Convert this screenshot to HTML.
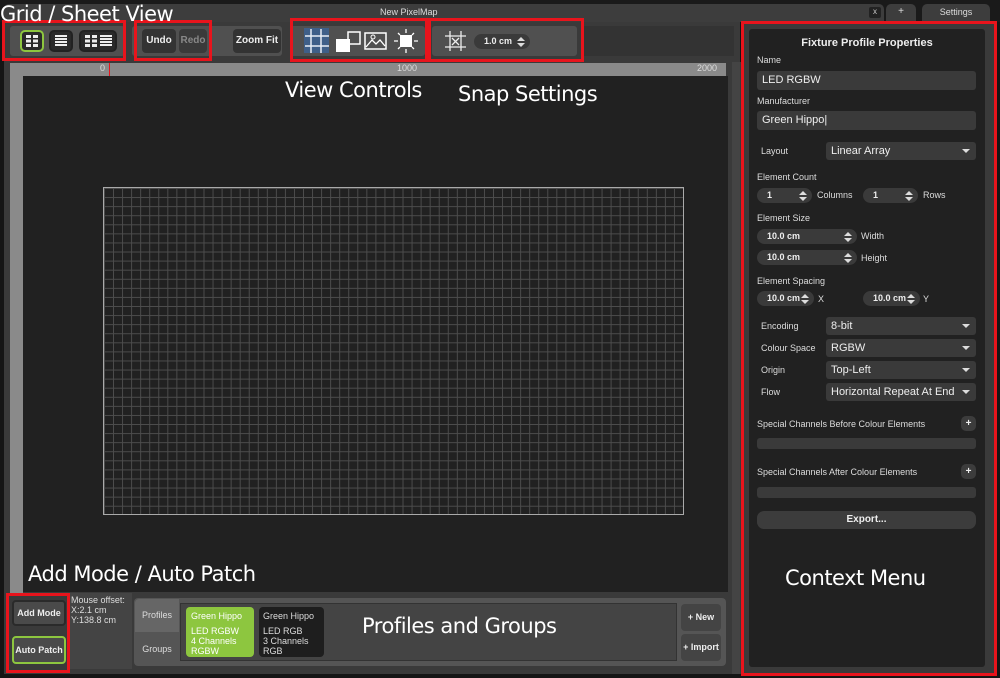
<!DOCTYPE html>
<html><head><meta charset="utf-8"><style>
*{box-sizing:border-box;margin:0;padding:0}
body{width:1000px;height:678px;background:#151515;font-family:"Liberation Sans",sans-serif;position:relative;overflow:hidden;color:#ddd}
.a{position:absolute}
.red{position:absolute;border:3px solid #e8141c}
.btn{position:absolute;background:#3c3c3c;border-radius:4px;color:#eee;font-size:10px;font-weight:bold;text-align:center;white-space:nowrap}
.lbl{position:absolute;font-size:9px;color:#ddd;white-space:nowrap}
.field{position:absolute;background:#3a3a3a;border-radius:3px;font-size:11px;color:#eee;padding-left:5px}
.spin{position:absolute;background:#3a3a3a;border-radius:8px;height:15px;font-size:9px;font-weight:bold;color:#eee;padding-left:10px;line-height:15px}
.spin:after{content:"";position:absolute;right:5px;top:3px;border-left:4px solid transparent;border-right:4px solid transparent;border-bottom:4px solid #ddd}
.spin:before{content:"";position:absolute;right:5px;top:9px;border-left:4px solid transparent;border-right:4px solid transparent;border-top:4px solid #ddd}
.dd{position:absolute;background:#3a3a3a;border-radius:3px;height:18px;font-size:11px;color:#eee;padding-left:5px;line-height:18px;left:826px;width:150px}
.dd:after{content:"";position:absolute;right:6px;top:7px;border-left:4px solid transparent;border-right:4px solid transparent;border-top:4px solid #ddd}
.ann{position:absolute;color:#fff;font-size:21px;font-family:"DejaVu Sans","Liberation Sans",sans-serif;font-weight:normal;letter-spacing:-0.5px;white-space:nowrap}
.grid{position:absolute;left:103px;top:187px;width:581px;height:328px;border:1px solid #aaa;
background-image:linear-gradient(to right,#4d4d4d 1px,transparent 1px),linear-gradient(to bottom,#4d4d4d 1px,transparent 1px);
background-size:9.06px 9.08px}
</style></head><body>
<div class="a" style="left:0;top:0;width:1000px;height:22px;background:#1a1a1a"></div>
<div class="a" style="left:4px;top:4px;width:880px;height:18px;background:#3d3d3d;border-radius:5px 5px 0 0"></div>
<div class="a" style="left:380px;top:7px;font-size:9px;color:#ddd">New PixelMap</div>
<div class="a" style="left:869px;top:7px;width:12px;height:11px;background:#222;border-radius:2px;font-size:8px;text-align:center;color:#ccc">x</div>
<div class="a" style="left:886px;top:4px;width:30px;height:18px;background:#3d3d3d;border-radius:5px 5px 0 0;font-size:10px;text-align:center;line-height:16px">+</div>
<div class="a" style="left:922px;top:4px;width:68px;height:18px;background:#3d3d3d;border-radius:5px 5px 0 0;font-size:9px;text-align:center;line-height:16px">Settings</div>
<div class="a" style="left:4px;top:22px;width:736px;height:40px;background:#3a3a3a"></div>
<div class="a" style="left:10px;top:26px;width:115px;height:30px;background:#505050;border-radius:3px"></div>
<div class="a" style="left:20px;top:30px;width:24px;height:22px;background:#2a2a2a;border:2px solid #8dc63f;border-radius:5px"></div>
<svg class="a" style="left:26px;top:35px" width="12" height="12"><g fill="#eee"><rect x="0" y="0" width="5" height="3"/><rect x="7" y="0" width="5" height="3"/><rect x="0" y="4.5" width="5" height="3"/><rect x="7" y="4.5" width="5" height="3"/><rect x="0" y="9" width="5" height="3"/><rect x="7" y="9" width="5" height="3"/></g></svg>
<div class="a" style="left:49px;top:30px;width:24px;height:22px;background:#2a2a2a;border:2px solid #222;border-radius:5px"></div>
<div class="a" style="left:55px;top:35px;width:12px;height:11px;background:repeating-linear-gradient(#eee 0 2px,transparent 2px 3px)"></div>
<div class="a" style="left:79px;top:30px;width:38px;height:22px;background:#2a2a2a;border:2px solid #222;border-radius:5px"></div>
<svg class="a" style="left:85px;top:35px" width="12" height="12"><g fill="#eee"><rect x="0" y="0" width="5" height="3"/><rect x="7" y="0" width="5" height="3"/><rect x="0" y="4.5" width="5" height="3"/><rect x="7" y="4.5" width="5" height="3"/><rect x="0" y="9" width="5" height="3"/><rect x="7" y="9" width="5" height="3"/></g></svg>
<div class="a" style="left:100px;top:35px;width:12px;height:11px;background:repeating-linear-gradient(#eee 0 2px,transparent 2px 3px)"></div>
<div class="a" style="left:132px;top:26px;width:150px;height:30px;background:#505050;border-radius:3px"></div>
<div class="btn" style="left:142px;top:29px;width:34px;height:24px;background:#333;line-height:24px">Undo</div>
<div class="btn" style="left:179px;top:29px;width:28px;height:24px;background:#3a3a3a;line-height:24px;color:#888">Redo</div>
<div class="btn" style="left:233px;top:29px;width:48px;height:24px;background:#333;line-height:24px">Zoom Fit</div>
<div class="a" style="left:290px;top:26px;width:135px;height:30px;background:#505050;border-radius:3px"></div>
<svg class="a" style="left:300px;top:27px" width="125" height="28">
<rect x="4" y="1" width="25" height="25" fill="#3f5f88"/>
<path d="M11 2V26M21 2V26M5 9H29M5 19H29" stroke="#e8eef5" stroke-width="1.5"/>
<rect x="48" y="5" width="12" height="12" fill="none" stroke="#fff" stroke-width="1.5"/>
<rect x="36" y="12" width="14" height="13" fill="#fff"/>
<rect x="65" y="6" width="21" height="16" fill="none" stroke="#fff" stroke-width="1.5"/>
<path d="M66 20L72 13L76 17L80 13L85 19" stroke="#fff" fill="none" stroke-width="1.3"/><circle cx="73" cy="10" r="2" fill="none" stroke="#fff"/>
<rect x="100" y="8" width="12" height="12" fill="#fff"/>
<path d="M106 2V6M106 22V26M94 14H98M114 14H118M98 6L100 8M114 6L112 8M98 22L100 20M114 22L112 20" stroke="#fff" stroke-width="1.3"/>
</svg>
<div class="a" style="left:432px;top:26px;width:145px;height:30px;background:#505050;border-radius:3px"></div>
<svg class="a" style="left:443px;top:29px" width="25" height="24"><path d="M7 2V22M18 2V22M2 7H23M2 18H23M9 9L16 16M16 9L9 16" stroke="#eee" stroke-width="1.3"/></svg>
<div class="spin" style="left:474px;top:34px;width:56px">1.0 cm</div>
<div class="a" style="left:584px;top:26px;width:150px;height:30px;background:#333"></div>
<div class="red" style="left:2px;top:20px;width:124px;height:41px"></div>
<div class="red" style="left:134px;top:20px;width:78px;height:41px"></div>
<div class="red" style="left:290px;top:18px;width:138px;height:44px"></div>
<div class="red" style="left:428px;top:18px;width:156px;height:44px"></div>
<div class="ann" style="left:0;top:2px">Grid / Sheet View</div>
<div class="a" style="left:4px;top:62px;width:738px;height:612px;background:#3a3a3a"></div>
<div class="a" style="left:10px;top:63px;width:716px;height:13px;background:#8a8a8a"></div>
<div class="a" style="left:10px;top:63px;width:13px;height:530px;background:#8a8a8a"></div>
<div class="a" style="left:100px;top:63px;font-size:9px;color:#ddd">0</div>
<div class="a" style="left:397px;top:63px;font-size:9px;color:#ddd">1000</div>
<div class="a" style="left:697px;top:63px;font-size:9px;color:#ddd">2000</div>
<div class="a" style="left:109px;top:63px;width:1px;height:13px;background:#e8141c"></div>
<div class="a" style="left:23px;top:76px;width:705px;height:516px;background:#212121"></div>
<div class="grid"></div>
<div class="a" style="left:732px;top:62px;width:8px;height:612px;background:#444"></div>
<div class="ann" style="left:285px;top:78px">View Controls</div>
<div class="ann" style="left:458px;top:82px">Snap Settings</div>
<div class="ann" style="left:28px;top:562px">Add Mode / Auto Patch</div>
<div class="a" style="left:8px;top:593px;width:722px;height:76px;background:#3a3a3a"></div>
<div class="btn" style="left:12px;top:600px;width:54px;height:26px;background:#4a4a4a;border:2px solid #2a2a2a;line-height:22px;font-size:9px">Add Mode</div>
<div class="btn" style="left:12px;top:636px;width:54px;height:28px;background:#4a4a4a;border:2px solid #8dc63f;line-height:24px;font-size:9px">Auto Patch</div>
<div class="red" style="left:6px;top:593px;width:64px;height:80px"></div>
<div class="a" style="left:70px;top:593px;width:62px;height:76px;background:#444"></div>
<div class="a" style="left:71px;top:595px;font-size:9px;line-height:10px;color:#ddd">Mouse offset:<br>X:2.1 cm<br>Y:138.8 cm</div>
<div class="a" style="left:134px;top:598px;width:592px;height:68px;background:#555;border-radius:4px"></div>
<div class="a" style="left:135px;top:599px;width:44px;height:33px;background:#666;border-radius:4px 0 0 0;font-size:9px;text-align:center;line-height:32px">Profiles</div>
<div class="a" style="left:135px;top:634px;width:44px;height:30px;font-size:9px;text-align:center;line-height:30px">Groups</div>
<div class="a" style="left:180px;top:603px;width:497px;height:58px;background:#444;border:1px solid #333"></div>
<div class="a" style="left:186px;top:607px;width:68px;height:50px;background:#8dc63f;border-radius:4px;font-size:9px;color:#fff;padding:4px 5px;line-height:10px;overflow:hidden">Green Hippo<br><div style="height:5px"></div>LED RGBW<br>4 Channels<br>RGBW</div>
<div class="a" style="left:259px;top:607px;width:65px;height:50px;background:#1e1e1e;border-radius:4px;font-size:9px;color:#ddd;padding:4px 4px;line-height:10px;overflow:hidden">Green Hippo<br><div style="height:5px"></div>LED RGB<br>3 Channels<br>RGB</div>
<div class="btn" style="left:681px;top:604px;width:40px;height:27px;background:#444;line-height:27px;font-size:9px">+ New</div>
<div class="btn" style="left:681px;top:634px;width:40px;height:27px;background:#444;line-height:27px;font-size:9px">+ Import</div>
<div class="ann" style="left:362px;top:614px">Profiles and Groups</div>
<div class="a" style="left:742px;top:22px;width:254px;height:652px;background:#3a3a3a"></div>
<div class="a" style="left:749px;top:29px;width:236px;height:638px;background:#212121;border-radius:3px"></div>
<div class="red" style="left:741px;top:21px;width:256px;height:655px"></div>
<div class="a" style="left:749px;top:37px;width:236px;text-align:center;font-size:11px;font-weight:bold;color:#eee">Fixture Profile Properties</div>
<div class="lbl" style="left:757px;top:55px">Name</div>
<div class="field" style="left:757px;top:71px;width:219px;height:19px;line-height:19px">LED RGBW</div>
<div class="lbl" style="left:757px;top:96px">Manufacturer</div>
<div class="field" style="left:757px;top:111px;width:219px;height:19px;line-height:19px">Green Hippo|</div>
<div class="lbl" style="left:761px;top:146px">Layout</div>
<div class="dd" style="top:142px">Linear Array</div>
<div class="lbl" style="left:757px;top:172px">Element Count</div>
<div class="spin" style="left:757px;top:188px;width:55px">1</div><div class="lbl" style="left:817px;top:190px">Columns</div>
<div class="spin" style="left:863px;top:188px;width:55px">1</div><div class="lbl" style="left:923px;top:190px">Rows</div>
<div class="lbl" style="left:757px;top:213px">Element Size</div>
<div class="spin" style="left:757px;top:229px;width:100px">10.0 cm</div><div class="lbl" style="left:861px;top:231px">Width</div>
<div class="spin" style="left:757px;top:250px;width:100px">10.0 cm</div><div class="lbl" style="left:861px;top:253px">Height</div>
<div class="lbl" style="left:757px;top:276px">Element Spacing</div>
<div class="spin" style="left:757px;top:291px;width:57px">10.0 cm</div><div class="lbl" style="left:818px;top:294px">X</div>
<div class="spin" style="left:863px;top:291px;width:57px">10.0 cm</div><div class="lbl" style="left:923px;top:294px">Y</div>
<div class="lbl" style="left:761px;top:321px">Encoding</div><div class="dd" style="top:317px">8-bit</div>
<div class="lbl" style="left:761px;top:343px">Colour Space</div><div class="dd" style="top:339px">RGBW</div>
<div class="lbl" style="left:761px;top:365px">Origin</div><div class="dd" style="top:361px">Top-Left</div>
<div class="lbl" style="left:761px;top:387px">Flow</div><div class="dd" style="top:383px">Horizontal Repeat At End</div>
<div class="lbl" style="left:757px;top:419px">Special Channels Before Colour Elements</div>
<div class="btn" style="left:961px;top:416px;width:15px;height:15px;line-height:15px;border-radius:5px">+</div>
<div class="a" style="left:757px;top:438px;width:219px;height:11px;background:#3a3a3a;border-radius:3px"></div>
<div class="lbl" style="left:757px;top:467px">Special Channels After Colour Elements</div>
<div class="btn" style="left:961px;top:464px;width:15px;height:15px;line-height:15px;border-radius:5px">+</div>
<div class="a" style="left:757px;top:487px;width:219px;height:11px;background:#3a3a3a;border-radius:3px"></div>
<div class="btn" style="left:757px;top:511px;width:219px;height:18px;line-height:18px;border-radius:7px;font-size:10px">Export...</div>
<div class="ann" style="left:785px;top:566px">Context Menu</div>
</body></html>
